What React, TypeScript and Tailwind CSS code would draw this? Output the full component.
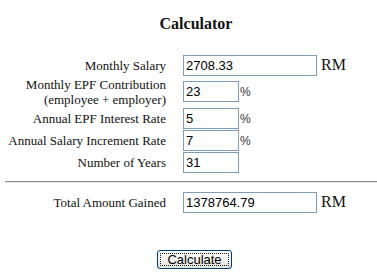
import React from "react";

const labelCls = "w-[166px] text-right text-[13px] leading-[15px] text-[#111]";
const inputCls =
  "h-[21px] border border-[#7f9db9] bg-white pl-[2px] text-[13px] text-black font-['Liberation_Sans',Arial,sans-serif] outline-none";

function Row({
  label,
  value,
  wide,
  unit,
  h = "h-[22px]",
}: {
  label: React.ReactNode;
  value: string;
  wide?: boolean;
  unit?: "RM" | "%";
  h?: string;
}) {
  return (
    <div className={`flex items-center ${h}`}>
      <div className={labelCls}>{label}</div>
      <input
        readOnly
        value={value}
        className={`${inputCls} ml-[17px] ${wide ? "w-[134px]" : "w-[56px]"}`}
      />
      {unit === "RM" && (
        <span className="ml-[4px] text-[16px] leading-[20px] text-[#111]">RM</span>
      )}
      {unit === "%" && (
        <span className="ml-[1px] mt-[1px] text-[12px] font-['Liberation_Sans',Arial,sans-serif] text-[#333]">
          %
        </span>
      )}
    </div>
  );
}

export default function App() {
  return (
    <div className="w-[377px] h-[277px] bg-white font-['Liberation_Serif','Times_New_Roman',serif] overflow-hidden">
      <div className="pt-[14px] pl-[15px] text-center text-[16px] leading-[20px] font-bold text-[#111]">
        Calculator
      </div>
      <div className="mt-[20px]">
        <Row label="Monthly Salary" value="2708.33" wide unit="RM" />
        <Row
          h="h-[31px]"
          label={
            <>
              Monthly EPF Contribution
              <br />
              (employee + employer)
            </>
          }
          value="23"
          unit="%"
        />
        <Row label="Annual EPF Interest Rate" value="5" unit="%" />
        <Row label="Annual Salary Increment Rate" value="7" unit="%" />
        <Row label="Number of Years" value="31" />
      </div>
      <div className="ml-[5px] mt-[8px] border-t border-t-[#8c8c8c] border-b border-b-[#e6e6e6]" />
      <div className="mt-[8px]">
        <Row label="Total Amount Gained" value="1378764.79" wide unit="RM" />
      </div>
      <div className="mt-[37px] flex justify-center pl-[12px]">
        <button className="h-[19px] w-[75px] rounded-[3px] border border-[#003c74] bg-gradient-to-b from-white to-[#e3e3db] p-[2px] font-['Liberation_Sans',Arial,sans-serif] text-[13px] text-black">
          <span className="flex h-full w-full items-center justify-center border border-dotted border-[#222] leading-none">
            Calculate
          </span>
        </button>
      </div>
    </div>
  );
}
